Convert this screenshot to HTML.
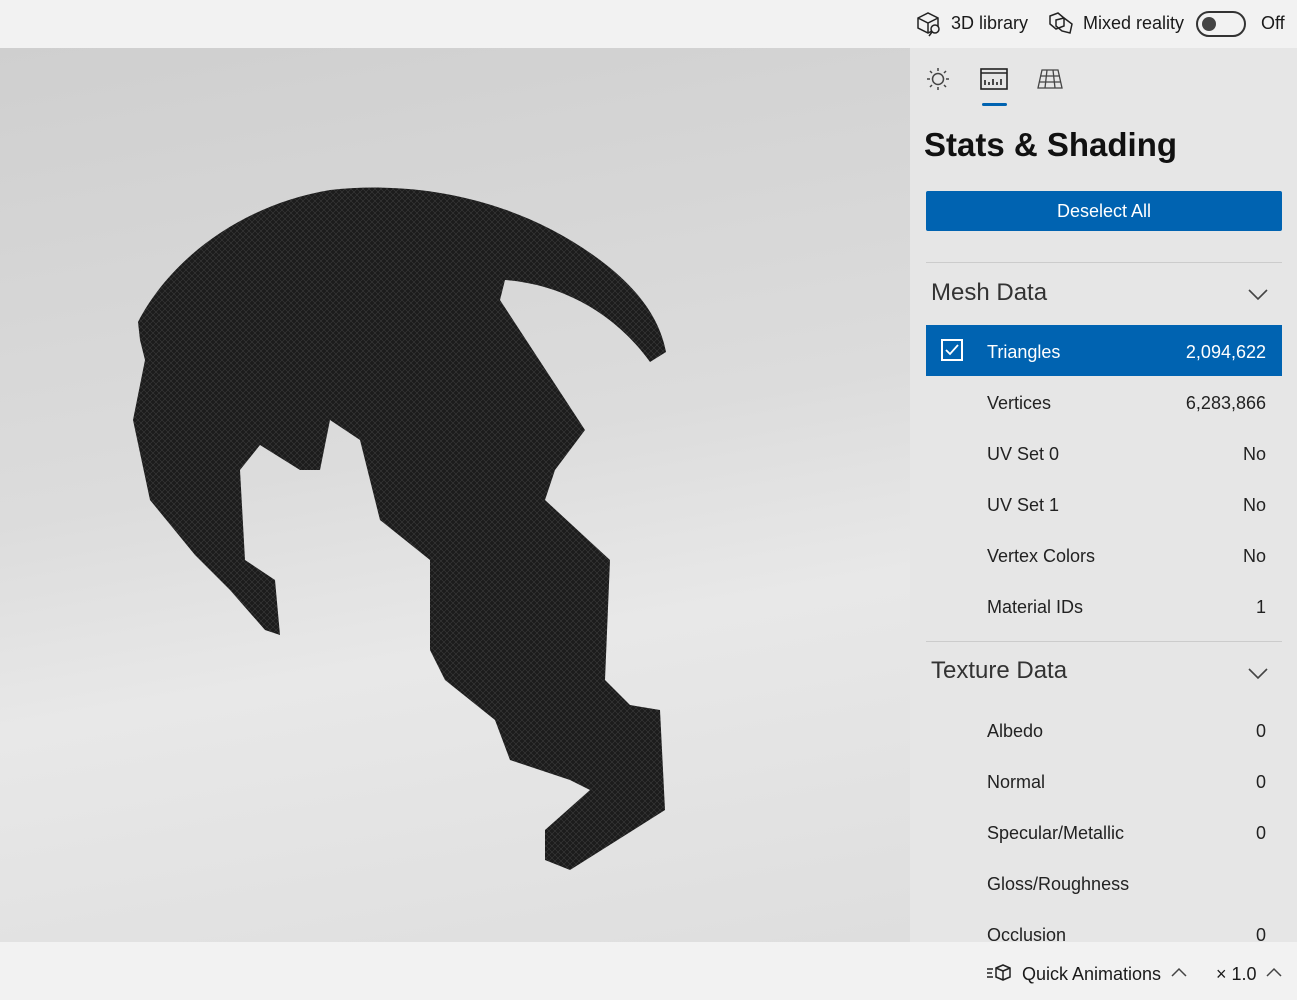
<!DOCTYPE html><html><head><style>
body{margin:0;width:1297px;height:1000px;overflow:hidden;font-family:"Liberation Sans",sans-serif;background:#f2f2f2;position:relative}
.top{position:absolute;left:0;top:0;width:1297px;height:48px;background:#f2f2f2}
.vp{position:absolute;left:0;top:48px;width:910px;height:894px;background:linear-gradient(170deg,#cfcfcf 0%,#dcdcdc 45%,#e8e8e8 65%,#dedede 100%)}
.panel{position:absolute;left:910px;top:48px;width:387px;height:894px;background:#e6e6e6;overflow:hidden}
.bot{position:absolute;left:0;top:942px;width:1297px;height:58px;background:#f2f2f2}
.t{position:absolute;font-size:18px;color:#1a1a1a;white-space:nowrap}
.row{position:absolute;left:77px;font-size:18px;color:#222}
.val{position:absolute;right:31px;font-size:18px;color:#222;text-align:right}
</style></head><body>
<div class="top">
<svg style="position:absolute;left:915px;top:10px" width="28" height="28" viewBox="0 0 28 28" fill="none" stroke="#222" stroke-width="1.5"><path d="M3 8l10-5 10 5v10l-10 5-10-5z M3 8l10 5 10-5 M13 13v10"/><circle cx="20" cy="19" r="4" fill="#f2f2f2"/><path d="M17 22l-3 4"/></svg>
<div class="t" style="left:951px;top:13px">3D library</div>
<svg style="position:absolute;left:1047px;top:10px" width="28" height="28" viewBox="0 0 28 28" fill="none" stroke="#222" stroke-width="1.5"><path d="M3 6l8-3 6 5v8l-8 3-6-5z M9 10l8-2 8 6-2 9-8-2-6-5z"/></svg>
<div class="t" style="left:1083px;top:13px">Mixed reality</div>
<div style="position:absolute;left:1196px;top:11px;border:2px solid #333;border-radius:13px;box-sizing:border-box;width:50px;height:26px"><div style="position:absolute;left:4px;top:4px;width:14px;height:14px;border-radius:50%;background:#444"></div></div>
<div class="t" style="left:1261px;top:13px">Off</div>
</div>
<div class="vp">
<svg width="910" height="894" viewBox="0 48 910 894">
<defs><pattern id="m" width="6" height="6" patternUnits="userSpaceOnUse"><rect width="6" height="6" fill="#1c1c1c"/><path d="M0 0L6 6M6 0L0 6" stroke="#3a3a3a" stroke-width=".6"/></pattern></defs>
<path fill="url(#m)" d="M138 322 C170 260 240 205 330 190 C420 180 520 200 600 260 C640 290 660 320 666 352 L650 362 C620 320 570 285 505 280 L500 300 L585 430 L555 470 L545 500 L610 560 L605 680 L630 705 L660 710 L665 810 L570 870 L545 860 L545 830 L590 790 L570 780 L510 760 L495 720 L445 680 L430 650 L430 560 L380 520 L360 440 L330 420 L320 470 L300 470 L260 445 L240 470 L245 560 L275 580 L280 635 L265 630 L230 590 L195 555 L150 500 L133 420 L145 360 L140 340Z"/>
</svg>
</div>
<div class="panel">
<svg style="position:absolute;left:15px;top:18px" width="26" height="26" viewBox="0 0 26 26" fill="none" stroke="#444" stroke-width="1.5"><circle cx="13" cy="13" r="5.5"/><path d="M13 2v3M13 21v3M2 13h3M21 13h3M5 5l2 2M19 19l2 2M5 21l2-2M19 7l2-2"/></svg>
<svg style="position:absolute;left:70px;top:19px" width="28" height="24" viewBox="0 0 28 24" fill="none" stroke="#222" stroke-width="1.6"><rect x="1" y="2" width="26" height="20"/><path d="M1 6h26M5 18v-5M9 18v-3M13 18v-6M17 18v-3M21 18v-6"/></svg>
<div style="position:absolute;left:72px;top:55px;width:25px;height:3px;background:#0063b1;border-radius:2px"></div>
<svg style="position:absolute;left:127px;top:20px" width="26" height="22" viewBox="0 0 26 22" fill="none" stroke="#444" stroke-width="1.3"><path d="M5 2h16l4 18H1z M3 8h20M2 14h22M10 2l-2 18M16 2l2 18"/></svg>
<div style="position:absolute;left:14px;top:78px;font-size:33px;font-weight:bold;color:#111">Stats &amp; Shading</div>
<div style="position:absolute;left:16px;top:143px;width:356px;height:40px;background:#0063b1;color:#fff;font-size:18px;text-align:center;line-height:40px;border-radius:2px">Deselect All</div>
<div style="position:absolute;left:16px;top:214px;width:356px;height:1px;background:#ccc"></div>
<div style="position:absolute;left:21px;top:231px;font-size:24px;color:#333">Mesh Data</div>
<svg style="position:absolute;left:337px;top:239px" width="22" height="14" viewBox="0 0 22 14" fill="none" stroke="#444" stroke-width="1.6"><path d="M2 3l9 9 9-9"/></svg>
<div style="position:absolute;left:16px;top:277px;width:356px;height:51px;background:#0063b1"></div>
<div style="position:absolute;left:31px;top:291px;width:22px;height:22px;border:2px solid #fff;box-sizing:border-box"></div>
<svg style="position:absolute;left:33px;top:293px" width="18" height="18" viewBox="0 0 18 18" fill="none" stroke="#fff" stroke-width="1.8"><path d="M3 9l4 4 8-9"/></svg>
<div class="row" style="top:294px;color:#fff">Triangles</div><div class="val" style="top:294px;color:#fff">2,094,622</div>
<div class="row" style="top:345px">Vertices</div><div class="val" style="top:345px">6,283,866</div>
<div class="row" style="top:396px">UV Set 0</div><div class="val" style="top:396px">No</div>
<div class="row" style="top:447px">UV Set 1</div><div class="val" style="top:447px">No</div>
<div class="row" style="top:498px">Vertex Colors</div><div class="val" style="top:498px">No</div>
<div class="row" style="top:549px">Material IDs</div><div class="val" style="top:549px">1</div>
<div style="position:absolute;left:16px;top:593px;width:356px;height:1px;background:#ccc"></div>
<div style="position:absolute;left:21px;top:609px;font-size:24px;color:#333">Texture Data</div>
<svg style="position:absolute;left:337px;top:618px" width="22" height="14" viewBox="0 0 22 14" fill="none" stroke="#444" stroke-width="1.6"><path d="M2 3l9 9 9-9"/></svg>
<div class="row" style="top:673px">Albedo</div><div class="val" style="top:673px">0</div>
<div class="row" style="top:724px">Normal</div><div class="val" style="top:724px">0</div>
<div class="row" style="top:775px">Specular/Metallic</div><div class="val" style="top:775px">0</div>
<div class="row" style="top:826px">Gloss/Roughness</div>
<div class="row" style="top:877px">Occlusion</div><div class="val" style="top:877px">0</div>
</div>
<div class="bot">
<svg style="position:absolute;left:986px;top:21px" width="26" height="20" viewBox="0 0 26 20" fill="none" stroke="#222" stroke-width="1.5"><path d="M1 6h6M1 10h5M1 14h6M10 5l7-3 7 3v9l-7 3-7-3z M10 5l7 3 7-3M17 8v9"/></svg>
<div class="t" style="left:1022px;top:22px">Quick Animations</div>
<svg style="position:absolute;left:1170px;top:24px" width="18" height="12" viewBox="0 0 18 12" fill="none" stroke="#444" stroke-width="1.5"><path d="M2 10l7-7 7 7"/></svg>
<div class="t" style="left:1216px;top:22px">× 1.0</div>
<svg style="position:absolute;left:1265px;top:24px" width="18" height="12" viewBox="0 0 18 12" fill="none" stroke="#444" stroke-width="1.5"><path d="M2 10l7-7 7 7"/></svg>
</div>
</body></html>
